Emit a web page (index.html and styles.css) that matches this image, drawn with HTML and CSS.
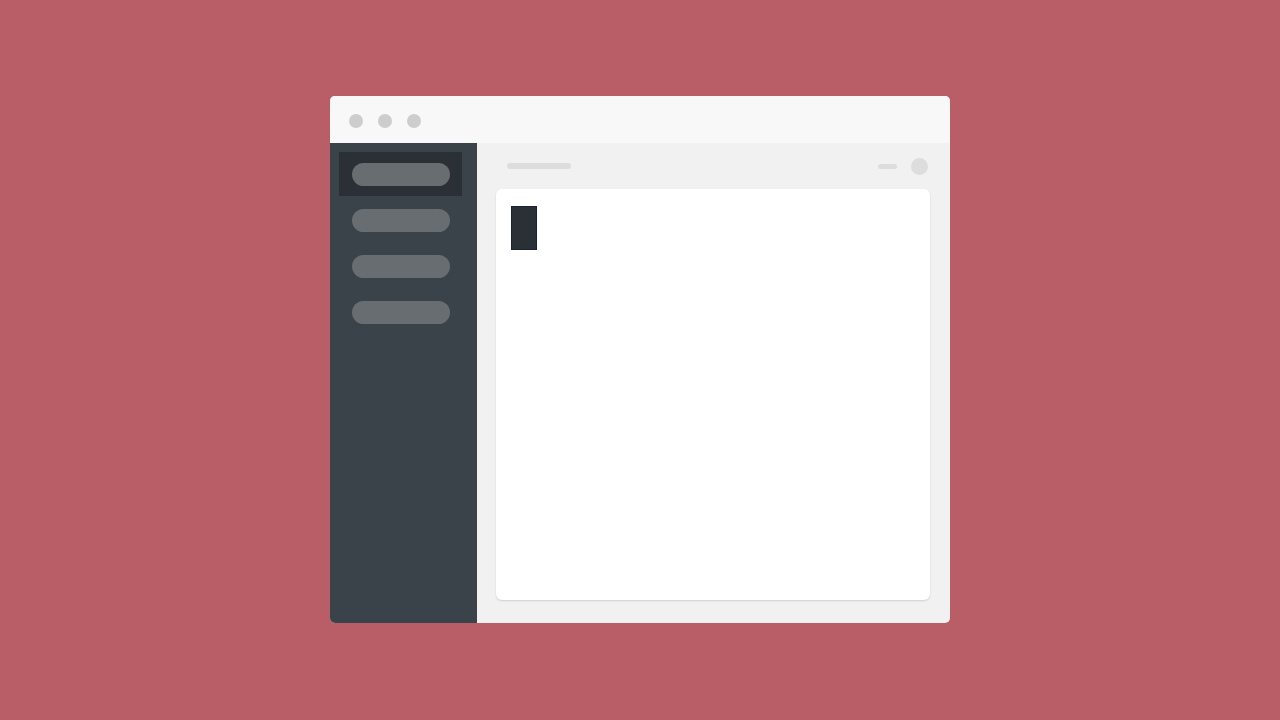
FILE: index.html
```html
<!DOCTYPE html>
<html>
<head>
<meta charset="utf-8">
<link rel="stylesheet" href="styles.css">
</head>
<body>
<div class="window">
  <div class="titlebar">
    <span class="dot"></span><span class="dot"></span><span class="dot"></span>
  </div>
  <div class="body">
    <nav class="sidebar">
      <div class="nav-item active"><span class="pill"></span></div>
      <div class="nav-item"><span class="pill"></span></div>
      <div class="nav-item"><span class="pill"></span></div>
      <div class="nav-item"><span class="pill"></span></div>
    </nav>
    <main class="main">
      <div class="topbar">
        <span class="title-line"></span>
        <div class="top-right">
          <span class="dash"></span>
          <span class="avatar"></span>
        </div>
      </div>
      <div class="card">
        <div class="block"></div>
      </div>
    </main>
  </div>
</div>
</body>
</html>
```

FILE: styles.css
```css
html, body {
  margin: 0;
  padding: 0;
  height: 100%;
}
body {
  background: #b95e66;
  display: flex;
  align-items: flex-start;
  justify-content: center;
  padding-top: 96px;
  box-sizing: border-box;
  font-family: "Liberation Sans", Arial, sans-serif;
}
.window {
  width: 620px;
  height: 527px;
  border-radius: 5px;
  overflow: hidden;
  display: flex;
  flex-direction: column;
  background: #f1f1f1;
}
.titlebar {
  height: 47px;
  box-sizing: border-box;
  padding-top: 2px;
  background: #f8f8f8;
  display: flex;
  align-items: center;
  gap: 15px;
  padding-left: 19px;
  flex: none;
}
.dot {
  width: 14px;
  height: 14px;
  border-radius: 50%;
  background: #cdcdcd;
}
.body {
  flex: 1;
  display: flex;
  min-height: 0;
}
.sidebar {
  width: 147px;
  background: #3b434a;
  padding: 9px 15px 0 9px;
  box-sizing: border-box;
  display: flex;
  flex-direction: column;
  gap: 2px;
  flex: none;
}
.nav-item {
  height: 44px;
  display: flex;
  align-items: center;
  padding-left: 13px;
}
.nav-item.active {
  background: #2a3036;
}
.pill {
  width: 98px;
  height: 23px;
  border-radius: 12px;
  background: #676d71;
}
.main {
  flex: 1;
  display: flex;
  flex-direction: column;
  padding: 0 20px 23px 19px;
  box-sizing: border-box;
}
.topbar {
  height: 46px;
  display: flex;
  align-items: center;
  justify-content: space-between;
  padding: 0 2px 0 11px;
  flex: none;
}
.title-line {
  width: 64px;
  height: 6px;
  border-radius: 3px;
  background: #dddddd;
}
.top-right {
  display: flex;
  align-items: center;
  gap: 14px;
}
.dash {
  width: 19px;
  height: 5px;
  border-radius: 3px;
  background: #dddddd;
}
.avatar {
  width: 17px;
  height: 17px;
  border-radius: 50%;
  background: #dddddd;
}
.card {
  flex: 1;
  background: #ffffff;
  border-radius: 6px;
  box-shadow: 0 1px 2px rgba(0, 0, 0, 0.14);
  padding: 17px 15px;
}
.block {
  width: 24px;
  height: 42px;
  background: #2b3036;
  border: 1px solid #1c2233;
}
```
